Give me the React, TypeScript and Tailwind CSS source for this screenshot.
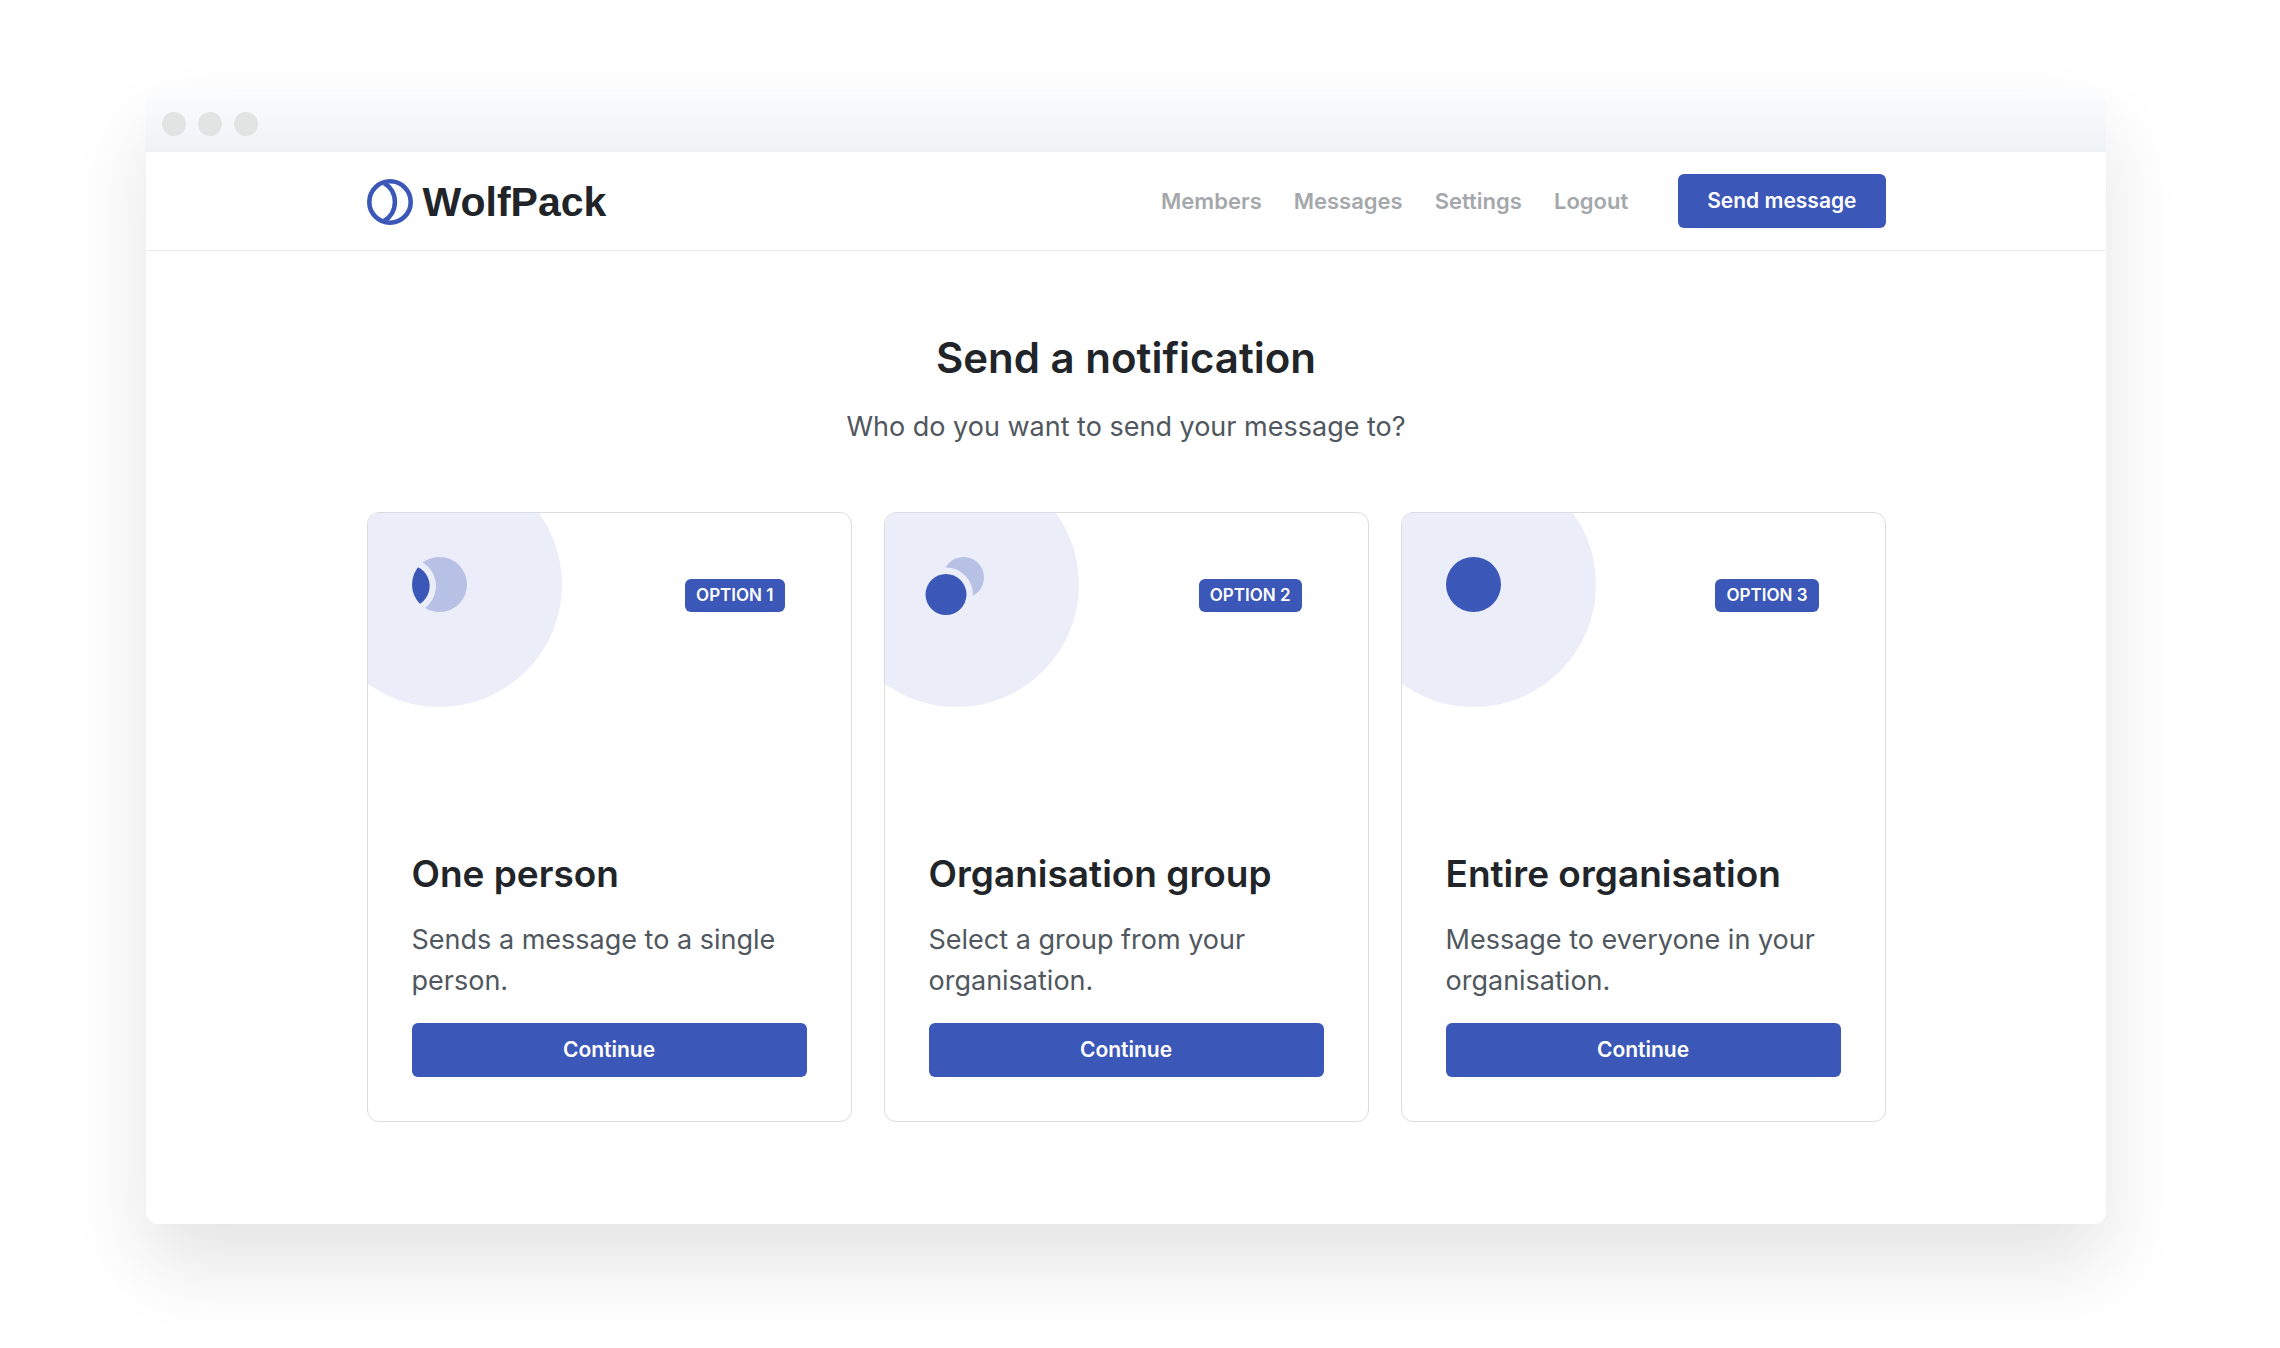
import React from "react";

const navLinks = ["Members", "Messages", "Settings", "Logout"];

const OnePersonIcon = () => (
  <svg viewBox="0 0 55 55" className="relative size-[55px] overflow-visible" aria-hidden="true">
    <defs>
      <clipPath id="person-clip">
        <circle cx="27.5" cy="27.5" r="27.5" />
      </clipPath>
      <mask id="person-mask">
        <rect width="55" height="55" fill="white" />
        <circle cx="-3.5" cy="29" r="27.5" fill="black" />
      </mask>
    </defs>
    <circle cx="27.5" cy="27.5" r="27.5" fill="#b7c0e5" mask="url(#person-mask)" />
    <circle cx="-3.5" cy="29" r="21.2" fill="#3b57b8" clipPath="url(#person-clip)" />
  </svg>
);

const GroupIcon = () => (
  <svg viewBox="0 0 55 55" className="relative size-[55px] overflow-visible" aria-hidden="true">
    <defs>
      <mask id="group-mask">
        <rect width="60" height="60" fill="white" />
        <circle cx="17" cy="37.5" r="27" fill="black" />
      </mask>
    </defs>
    <circle cx="34.5" cy="20.5" r="20.5" fill="#b7c0e5" mask="url(#group-mask)" />
    <circle cx="17" cy="37.5" r="20.5" fill="#3b57b8" />
  </svg>
);

const EveryoneIcon = () => (
  <svg viewBox="0 0 55 55" className="relative size-[55px]" aria-hidden="true">
    <circle cx="27.5" cy="27.5" r="27.5" fill="#3b57b8" />
  </svg>
);

const options = [
  {
    badge: "Option 1",
    title: "One person",
    text: "Sends a message to a single person.",
    icon: <OnePersonIcon />,
  },
  {
    badge: "Option 2",
    title: "Organisation group",
    text: "Select a group from your organisation.",
    icon: <GroupIcon />,
  },
  {
    badge: "Option 3",
    title: "Entire organisation",
    text: "Message to everyone in your organisation.",
    icon: <EveryoneIcon />,
  },
];

const Logo = () => (
  <a href="#" className="flex items-center gap-2.5 pt-0.5">
    <svg viewBox="0 0 46 46" className="size-[46px]" fill="none" stroke="#3b57b8" aria-hidden="true">
      <circle cx="23" cy="23" r="20.7" strokeWidth="4.6" />
      <path d="M17 4 A22 22 0 0 1 17 42" strokeWidth="4.6" />
    </svg>
    <span className="font-['Liberation_Sans',Arial,sans-serif] text-[41px] leading-[46px] font-bold">
      WolfPack
    </span>
  </a>
);

const Header = () => {
  return (
    <header className="border-b border-[#e9ebed]">
      <div className="max-w-[1519px] h-[98px] mx-auto flex items-center justify-between">
        <Logo />
        <div className="flex items-center gap-[50px]">
          <nav className="flex gap-8 text-[22px] font-semibold text-[#a5a8ab]">
            {navLinks.map((link) => (
              <a key={link} href="#">
                {link}
              </a>
            ))}
          </nav>
          <button className="h-[54px] px-[29px] rounded-md bg-[#3b57b8] text-[21px] font-semibold text-white">
            Send message
          </button>
        </div>
      </div>
    </header>
  );
};

type OptionProps = (typeof options)[number];

const OptionCard = ({ badge, title, text, icon }: OptionProps) => {
  return (
    <div className="p-11 rounded-xl border border-[#dadcde] overflow-hidden">
      <div className="flex items-end justify-between mb-[239px]">
        <div className="relative">
          {/* tinted disc behind the icon, cut off by the card */}
          <div className="absolute -inset-[95px] rounded-full bg-[#ebedf9]" />
          {icon}
        </div>
        <span className="h-[33px] mr-[22px] px-[11px] rounded-md bg-[#3b57b8] text-[17px] leading-[33px] font-semibold text-white uppercase">
          {badge}
        </span>
      </div>
      <h2 className="text-[37px] leading-[46px] font-semibold">{title}</h2>
      <p className="my-[22px] text-[27px] leading-[41px] text-[#50575e]">{text}</p>
      <button className="w-full h-[54px] rounded-md bg-[#3b57b8] text-[21px] font-semibold text-white">
        Continue
      </button>
    </div>
  );
};

const App = () => {
  return (
    <div className="min-h-screen bg-white pl-[146px] pr-[174px] pt-[92px] pb-[124px] font-['Inter',sans-serif] text-[#212529]">
      <div className="rounded-xl bg-white overflow-hidden shadow-[0_40px_80px_rgba(0,0,0,0.11)]">
        <div className="h-[60px] px-4 pt-5 flex gap-3 bg-linear-to-b from-[#fbfcfe] to-[#eff2f5]">
          <span className="size-6 rounded-full bg-[#e2e4e3]" />
          <span className="size-6 rounded-full bg-[#e2e4e3]" />
          <span className="size-6 rounded-full bg-[#e2e4e3]" />
        </div>
        <Header />
        <main className="max-w-[1519px] mx-auto pt-20 pb-[102px]">
          <div className="text-center">
            <h1 className="text-[42px] leading-[53px] font-semibold">Send a notification</h1>
            <p className="mt-[22px] text-[27px] leading-[41px] text-[#50575e]">
              Who do you want to send your message to?
            </p>
          </div>
          <div className="mt-[65px] grid grid-cols-3 gap-8">
            {options.map((option) => (
              <OptionCard key={option.title} {...option} />
            ))}
          </div>
        </main>
      </div>
    </div>
  );
};

export default App;
